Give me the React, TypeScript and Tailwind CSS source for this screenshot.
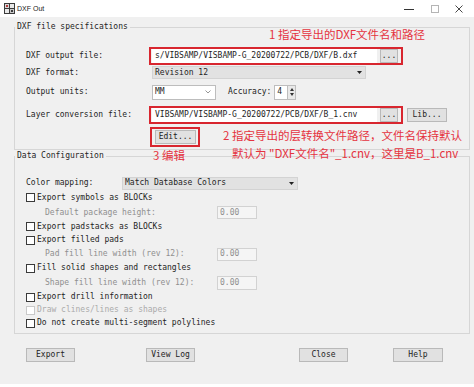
import React from "react";

const TXT = "text-[#1e1e1e]";

function Btn({ label, w, cls }: { label: string; w: string; cls?: string }) {
  return (
    <div
      className={`${w} h-[14px] bg-[#e1e1e1] border border-[#b9b9b9] flex items-center justify-center ${TXT} ${cls ?? ""}`}
    >
      {label}
    </div>
  );
}

function DownTri() {
  return (
    <svg width="5" height="3" viewBox="0 0 5 3" className="ml-auto mr-[3px]">
      <path d="M0 0 L5 0 L2.5 3 Z" fill="#222" />
    </svg>
  );
}

function Check({ label, h, disabled }: { label: string; h: string; disabled?: boolean }) {
  return (
    <div className={`flex items-center pl-[11px] ${h}`}>
      <span
        className={`w-[9px] h-[9px] border bg-white ${disabled ? "border-[#c9c9c9]" : "border-[#3a3a3a]"}`}
      />
      <span className={`ml-[2px] whitespace-nowrap ${disabled ? "text-[#ababab]" : TXT}`}>{label}</span>
    </div>
  );
}

function ValueRow({ label, h, ih }: { label: string; h: string; ih: string }) {
  return (
    <div className={`flex items-center pl-[30px] ${h}`}>
      <span className="w-[172px] text-[#8f8f8f] whitespace-nowrap">{label}</span>
      <div
        className={`w-[40px] ${ih} bg-[#f5f5f5] border border-[#d2d2d2] flex items-center pl-[2px] text-[#8f8f8f]`}
      >
        0.00
      </div>
    </div>
  );
}

export default function App() {
  return (
    <div className="relative w-[474px] h-[387px] bg-white overflow-hidden font-['DejaVu_Sans_Mono','Liberation_Mono',monospace] text-[8px] leading-[10px]">
      {/* Title bar */}
      <div className="h-[17px] bg-white flex items-center">
        <svg width="11" height="11" viewBox="0 0 11 11" className="ml-[4px]">
          <rect x="0" y="0" width="11" height="11" fill="#3b3b3b" />
          <rect x="1" y="1" width="4" height="4" fill="#d8d8d8" />
          <rect x="6" y="1" width="4" height="4" fill="#e9e9e9" />
          <rect x="1" y="6" width="4" height="4" fill="#e9e9e9" />
          <rect x="6" y="6" width="4" height="4" fill="#c9c9c9" />
          <rect x="2" y="2" width="2" height="2" fill="#b33a3a" />
          <rect x="7" y="7" width="2" height="2" fill="#3b3b3b" />
        </svg>
        <span className="ml-[2px] font-['Liberation_Sans',sans-serif] text-[7px] text-[#222]">DXF Out</span>
        <div className="ml-auto flex items-center">
          <svg width="10" height="10" viewBox="0 0 10 10">
            <line x1="0" y1="5.5" x2="10" y2="5.5" stroke="#333" strokeWidth="1" />
          </svg>
          <svg width="8" height="8" viewBox="0 0 8 8" className="ml-[17px]">
            <rect x="0.5" y="0.5" width="7" height="7" fill="none" stroke="#b5b5b5" strokeWidth="1" />
          </svg>
          <svg width="8" height="8" viewBox="0 0 8 8" className="ml-[16px] mr-[11px]">
            <path d="M0.5 0.5 L7.5 7.5 M7.5 0.5 L0.5 7.5" stroke="#333" strokeWidth="0.9" />
          </svg>
        </div>
      </div>

      {/* Window body */}
      <div className="h-[367px] bg-[#f0f0f0] pt-[4px] flex flex-col">
        {/* Group 1 */}
        <fieldset className="ml-[14px] w-[456px] border border-[#d6d6d6] pb-[2px]">
          <legend className="px-[2px] leading-[12px] text-[#1e1e1e]">DXF file specifications</legend>

          {/* Output file */}
          <div className={`flex items-center mt-[14px] h-[18px] pl-[11px] ${TXT}`}>
            <span className="w-[123px] whitespace-nowrap">DXF output file:</span>
            <div className="flex items-center w-[254px] h-[18px] border-2 border-[#d8262f]">
              <div className="ml-[1px] w-[225px] h-[14px] bg-white flex items-center pl-[3px] whitespace-nowrap overflow-hidden">
                s/VIBSAMP/VISBAMP-G_20200722/PCB/DXF/B.dxf
              </div>
              <Btn label="..." w="w-[18px]" cls="ml-[3px]" />
            </div>
          </div>

          {/* Format */}
          <div className={`flex items-center mt-[1px] h-[13px] pl-[11px] ${TXT}`}>
            <span className="w-[126px] whitespace-nowrap">DXF format:</span>
            <div className="w-[214px] h-[13px] bg-[#e2e2e2] border border-[#d3d3d3] flex items-center pl-[2px]">
              Revision 12
              <DownTri />
            </div>
          </div>

          {/* Units */}
          <div className={`flex items-center mt-[5px] h-[16px] pl-[11px] ${TXT}`}>
            <span className="w-[126px] whitespace-nowrap">Output units:</span>
            <div className="w-[64px] h-[15px] bg-white border border-[#bdbdbd] flex items-center pl-[2px]">
              MM
              <svg width="6" height="4" viewBox="0 0 6 4" className="ml-auto mr-[4px]">
                <path d="M0.5 0.5 L3 3 L5.5 0.5" fill="none" stroke="#8a8a8a" strokeWidth="0.9" />
              </svg>
            </div>
            <span className="ml-[12px]">Accuracy:</span>
            <div className="ml-[3px] flex h-[15px]">
              <div className="w-[14px] h-[15px] bg-white border border-[#bdbdbd] flex items-center pl-[2px]">4</div>
              <div className="w-[8px] h-[15px] bg-[#e9e9e9] border border-l-0 border-[#bdbdbd] flex flex-col items-center justify-center gap-[2px]">
                <svg width="4" height="3" viewBox="0 0 4 3">
                  <path d="M0 3 L4 3 L2 0 Z" fill="#333" />
                </svg>
                <svg width="4" height="3" viewBox="0 0 4 3">
                  <path d="M0 0 L4 0 L2 3 Z" fill="#333" />
                </svg>
              </div>
            </div>
          </div>

          {/* Layer conversion */}
          <div className={`flex items-center mt-[6px] h-[18px] pl-[11px] ${TXT}`}>
            <span className="w-[123px] whitespace-nowrap">Layer conversion file:</span>
            <div className="flex items-center w-[254px] h-[18px] border-2 border-[#d8262f]">
              <div className="ml-[1px] w-[225px] h-[14px] bg-white flex items-center pl-[3px] whitespace-nowrap overflow-hidden">
                VIBSAMP/VISBAMP-G_20200722/PCB/DXF/B_1.cnv
              </div>
              <Btn label="..." w="w-[18px]" cls="ml-[3px]" />
            </div>
            <Btn label="Lib..." w="w-[40px]" cls="ml-[4px]" />
          </div>

          {/* Edit */}
          <div className="flex items-center mt-[3px] h-[20px] pl-[135px]">
            <div className="w-[50px] h-[20px] border-2 border-[#d8262f] flex items-center">
              <Btn label="Edit..." w="w-[41px]" cls="ml-[3px] h-[13px]" />
            </div>
          </div>
        </fieldset>

        {/* Group 2 */}
        <fieldset className="ml-[14px] w-[456px] border border-[#d6d6d6] pb-[3px]">
          <legend className="px-[2px] leading-[12px] text-[#1e1e1e]">Data Configuration</legend>

          <div className={`flex items-center mt-[14px] h-[14px] pl-[11px] ${TXT}`}>
            <span className="w-[96px] whitespace-nowrap">Color mapping:</span>
            <div className="w-[176px] h-[13px] bg-[#e2e2e2] border border-[#d3d3d3] flex items-center pl-[2px]">
              Match Database Colors
              <DownTri />
            </div>
          </div>
          <Check label="Export symbols as BLOCKs" h="h-[15px]" />
          <ValueRow label="Default package height:" h="h-[15px]" ih="h-[13px]" />
          <Check label="Export padstacks as BLOCKs" h="h-[13px]" />
          <Check label="Export filled pads" h="h-[14px]" />
          <ValueRow label="Pad fill line width (rev 12):" h="h-[14px]" ih="h-[13px]" />
          <Check label="Fill solid shapes and rectangles" h="h-[14px]" />
          <ValueRow label="Shape fill line width (rev 12):" h="h-[15px]" ih="h-[14px]" />
          <Check label="Export drill information" h="h-[14px]" />
          <Check label="Draw clines/lines as shapes" h="h-[12px]" disabled />
          <Check label="Do not create multi-segment polylines" h="h-[14px]" />
        </fieldset>

        {/* Bottom buttons */}
        <div className="flex items-center mt-[14px] h-[14px]">
          <Btn label="Export" w="w-[49px]" cls="ml-[26px]" />
          <Btn label="View Log" w="w-[49px]" cls="ml-[71px]" />
          <Btn label="Close" w="w-[49px]" cls="ml-[104px]" />
          <Btn label="Help" w="w-[50px]" cls="ml-[45px]" />
        </div>
      </div>

      {/* Red annotations (overlaid markup) */}
      <div className="absolute left-[269px] top-[27px] font-['Noto_Sans_CJK_SC','Noto_Sans',sans-serif] text-[11.5px] leading-[14px] text-[#e5333f] whitespace-nowrap">
        1 指定导出的DXF文件名和路径
      </div>
      <div className="absolute left-[223px] top-[128px] font-['Noto_Sans_CJK_SC','Noto_Sans',sans-serif] text-[11.5px] leading-[14px] text-[#e5333f] whitespace-nowrap">
        2 指定导出的层转换文件路径，文件名保持默认
      </div>
      <div className="absolute left-[232px] top-[146px] font-['Noto_Sans_CJK_SC','Noto_Sans',sans-serif] text-[11.5px] leading-[14px] text-[#e5333f] whitespace-nowrap">
        默认为 "DXF文件名"_1.cnv，这里是B_1.cnv
      </div>
      <div className="absolute left-[153px] top-[148px] font-['Noto_Sans_CJK_SC','Noto_Sans',sans-serif] text-[11.5px] leading-[14px] text-[#e5333f] whitespace-nowrap">
        3 编辑
      </div>
    </div>
  );
}
